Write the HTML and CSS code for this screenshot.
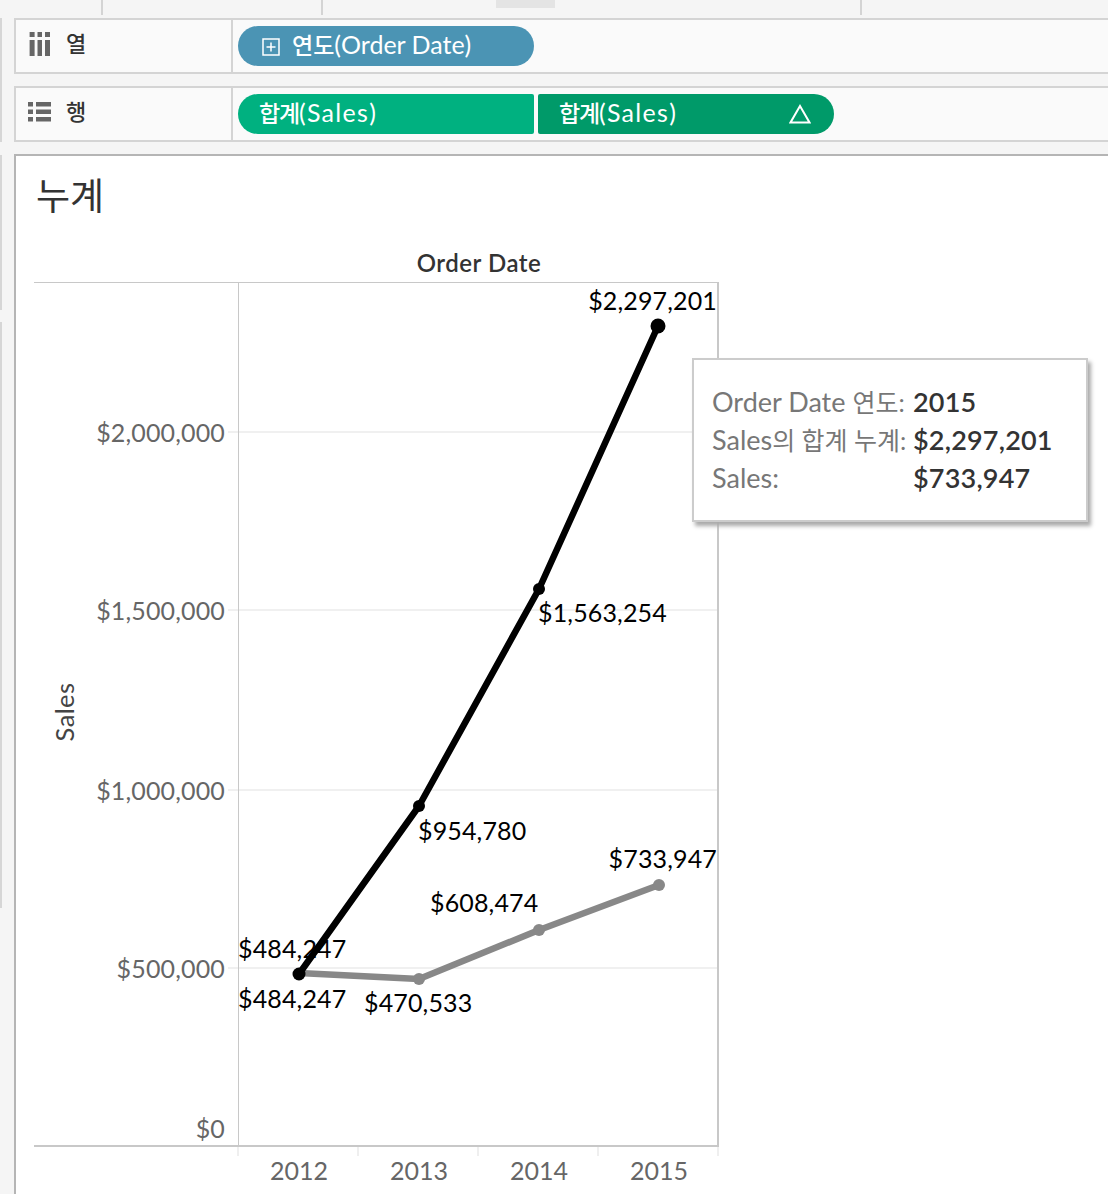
FILE: index.html
```html
<!DOCTYPE html>
<html lang="ko">
<head>
<meta charset="utf-8">
<title>누계</title>
<link rel="stylesheet" href="styles.css">
</head>
<body>
<div class="page">
  <aside class="rail">
    <div class="rail-seg seg-a"></div>
    <div class="rail-seg seg-b"></div>
    <div class="rail-seg seg-c"></div>
  </aside>
  <main class="main">
    <div class="strip">
      <div></div>
      <div class="tick-cell"></div>
      <div class="tick-cell"></div>
      <div class="strip-block"></div>
      <div></div>
      <div class="tick-cell"></div>
    </div>
    <section class="shelf">
      <div class="shelf-head">
        <svg class="shelf-icon icon-cols" width="24" height="26" viewBox="0 0 24 26"><g fill="#666"><rect x="2.6" y="0" width="5" height="5"/><rect x="2.6" y="8" width="5" height="16"/><rect x="10.5" y="0" width="4.5" height="5"/><rect x="10.5" y="8" width="4.5" height="16"/><rect x="18" y="0" width="5" height="5"/><rect x="18" y="8" width="5" height="16"/></g></svg>
        <span class="shelf-name">열</span>
      </div>
      <div class="shelf-body">
        <div class="pill pill-blue">
          <svg class="plus-icon" width="18" height="18" viewBox="0 0 18 18"><path d="M1 1h16v16H1zM9 4.5v9M4.5 9h9" fill="none" stroke="#fff" stroke-width="1.5"/></svg>
          <span class="pill-text"><span class="ko">연도</span>(Order Date)</span>
        </div>
      </div>
    </section>
    <section class="shelf">
      <div class="shelf-head">
        <svg class="shelf-icon" width="24" height="26" viewBox="0 0 24 26"><g fill="#666"><rect x="1" y="1" width="5" height="4.5"/><rect x="9" y="1" width="16" height="4.5"/><rect x="1" y="8.5" width="5" height="4.5"/><rect x="9" y="8.5" width="16" height="4.5"/><rect x="1" y="16" width="5" height="4.5"/><rect x="9" y="16" width="16" height="4.5"/></g></svg>
        <span class="shelf-name">행</span>
      </div>
      <div class="shelf-body">
        <div class="pill pill-green pill-start"><span class="pill-text wide"><span class="ko">합계</span>(Sales)</span></div>
        <div class="pill pill-dark pill-end">
          <span class="pill-text wide"><span class="ko">합계</span>(Sales)</span>
          <svg class="delta-icon" width="22" height="20" viewBox="0 0 22 20"><path d="M11 2L20.5 18.5H1.5Z" fill="none" stroke="#fff" stroke-width="2"/></svg>
        </div>
      </div>
    </section>
    <section class="panel">
      <h1 class="title">누계</h1>
      <svg class="chart" width="1092" height="968" viewBox="16 226 1092 968">
        <g class="grid">
          <line x1="228" y1="432" x2="717" y2="432"/>
          <line x1="228" y1="610" x2="717" y2="610"/>
          <line x1="228" y1="790" x2="717" y2="790"/>
          <line x1="228" y1="968" x2="717" y2="968"/>
        </g>
        <g class="frame">
          <line x1="34" y1="282.5" x2="718" y2="282.5"/>
          <line x1="238.5" y1="282" x2="238.5" y2="1146"/>
        </g>
        <g class="frame-strong">
          <line x1="34" y1="1146" x2="719" y2="1146"/>
          <line x1="718" y1="282" x2="718" y2="1146"/>
        </g>
        <g class="xticks">
          <line x1="238" y1="1147" x2="238" y2="1156"/>
          <line x1="358" y1="1147" x2="358" y2="1156"/>
          <line x1="478" y1="1147" x2="478" y2="1156"/>
          <line x1="598" y1="1147" x2="598" y2="1156"/>
          <line x1="718" y1="1147" x2="718" y2="1156"/>
        </g>
        <text class="head-label" x="479" y="272" text-anchor="middle">Order Date</text>
        <text class="axis-title" transform="translate(74 712) rotate(-90)" text-anchor="middle">Sales</text>
        <g class="axis-label" text-anchor="end">
          <text x="225" y="442">$2,000,000</text>
          <text x="225" y="620">$1,500,000</text>
          <text x="225" y="800">$1,000,000</text>
          <text x="225" y="978">$500,000</text>
          <text x="225" y="1138">$0</text>
        </g>
        <g class="year-label" text-anchor="middle">
          <text x="299" y="1180">2012</text>
          <text x="419" y="1180">2013</text>
          <text x="539" y="1180">2014</text>
          <text x="659" y="1180">2015</text>
        </g>
        <g class="data-label">
          <text x="717" y="310" text-anchor="end">$2,297,201</text>
          <text x="538" y="622">$1,563,254</text>
          <text x="418" y="840">$954,780</text>
          <text x="238" y="958">$484,247</text>
          <text x="238" y="1008">$484,247</text>
          <text x="364" y="1012">$470,533</text>
          <text x="430" y="912">$608,474</text>
          <text x="717" y="868" text-anchor="end">$733,947</text>
        </g>
        <polyline class="line-gray" points="299,973 419,979 539,930 659,885"/>
        <g class="dot-gray">
          <circle cx="419" cy="979" r="6"/>
          <circle cx="539" cy="930" r="6"/>
          <circle cx="659" cy="885" r="6"/>
        </g>
        <polyline class="line-black" points="299,974 419,806 539,589 658,326"/>
        <g class="dot-black">
          <circle cx="299" cy="974" r="6.5"/>
          <circle cx="419" cy="806" r="6"/>
          <circle cx="539" cy="589" r="6"/>
          <circle cx="658" cy="326" r="7.5"/>
        </g>
      </svg>
      <div class="tooltip">
        <span class="tip-key">Order Date <span class="ko-tip">연도:</span></span><span class="tip-val">2015</span>
        <span class="tip-key">Sales<span class="ko-tip">의 합계 누계:</span></span><span class="tip-val">$2,297,201</span>
        <span class="tip-key">Sales:</span><span class="tip-val">$733,947</span>
      </div>
    </section>
  </main>
</div>
</body>
</html>
```
FILE: styles.css
```css
* { box-sizing: border-box; }
html, body { margin: 0; padding: 0; }
body { font-family: Lato, "Noto Sans CJK KR", sans-serif; background: #f5f5f5; }
.page { display: flex; width: 1108px; height: 1194px; overflow: hidden; background: #f5f5f5; }

.rail { width: 14px; flex: none; display: flex; flex-direction: column; padding-top: 18px; }
.rail-seg { width: 2px; background: #d6d6d6; }
.seg-a { height: 124px; }
.seg-b { height: 155px; margin-top: 13px; }
.seg-c { height: 586px; margin-top: 12px; }

.main { flex: 1; min-width: 0; display: flex; flex-direction: column; }
.strip { height: 18px; flex: none; display: grid; grid-template-columns: 87px 220px 175px 59px 305px 1fr; align-items: start; }
.tick-cell { height: 15px; border-left: 2px solid #d4d4d4; }
.strip-block { height: 8px; background: #e4e4e4; }

.shelf { flex: none; height: 56px; margin-bottom: 12px; display: flex; background: #fafafa; border: solid #d4d4d4; border-width: 2px 0 2px 2px; }
.shelf-head { width: 217px; flex: none; display: flex; align-items: center; padding-left: 11px; border-right: 2px solid #d4d4d4; }
.shelf-icon { flex: none; }
.icon-cols { margin-top: -2px; }
.shelf-name { margin-left: 15px; font-size: 22px; line-height: 26px; color: #333; margin-top: -4px; font-weight: 500; }
.shelf-body { flex: 1; display: flex; gap: 4px; padding: 6px 0 0 5px; }

.pill { width: 296px; height: 40px; display: flex; align-items: center; color: #fff; font-size: 25px; line-height: 38px; }
.pill-text { margin-top: -3px; }
.ko { font-size: 23px; font-weight: 500; }
.wide { letter-spacing: 1.3px; }
.wide .ko { letter-spacing: -1.2px; }
.pill-blue { background: #4b94b4; border-radius: 20px; padding-left: 24px; }
.pill-green { background: #00b180; border-radius: 20px 2px 2px 20px; padding-left: 21px; }
.pill-dark { background: #009a69; border-radius: 2px 20px 20px 2px; padding: 0 23px 0 21px; justify-content: space-between; }
.plus-icon { flex: none; margin: 2px 12px 0 0; }
.delta-icon { flex: none; }

.panel { flex: 1; position: relative; background: #fff; border: solid #b5b5b5; border-width: 2px 0 0 2px; }
.title { margin: 0; height: 70px; padding: 15px 0 0 20px; font-size: 37px; line-height: 50px; font-weight: 400; color: #333; }
.chart { display: block; }

.grid line { stroke: #f0f0f0; stroke-width: 2; }
.frame line { stroke: #c8c8c8; stroke-width: 1; }
.frame-strong line { stroke: #c8c8c8; stroke-width: 2; }
.xticks line { stroke: #efefef; stroke-width: 2; }

.head-label { font-family: Lato, sans-serif; font-size: 24px; font-weight: 600; letter-spacing: 0.5px; fill: #333; }
.axis-title { font-family: Lato, sans-serif; font-size: 25.5px; letter-spacing: 0.4px; fill: #444; }
.axis-label text { font-family: Lato, sans-serif; font-size: 25px; letter-spacing: 0.15px; fill: #666; }
.year-label text { font-family: Lato, sans-serif; font-size: 25px; fill: #666; }
.data-label text { font-family: Lato, sans-serif; font-size: 25px; letter-spacing: 0.15px; fill: #000; }

.line-gray, .line-black { fill: none; stroke-linejoin: round; }
.line-gray { stroke: #888; stroke-width: 6.5; }
.line-black { stroke: #000; stroke-width: 6.5; }
.dot-gray circle { fill: #888; }
.dot-black circle { fill: #000; }

.tooltip { position: absolute; left: 676px; top: 202px; width: 396px; height: 164px; padding: 22px 0 0 18px; display: grid; grid-template-columns: 201px 1fr; grid-auto-rows: 38px; align-items: center; background: #fff; border: 2px solid #ccc; box-shadow: 3px 4px 4px #aaa; font-size: 27px; }
.tip-key { color: #777; white-space: nowrap; }
.ko-tip { font-size: 25px; }
.tip-val { color: #333; font-weight: 600; letter-spacing: 0.2px; }
```
